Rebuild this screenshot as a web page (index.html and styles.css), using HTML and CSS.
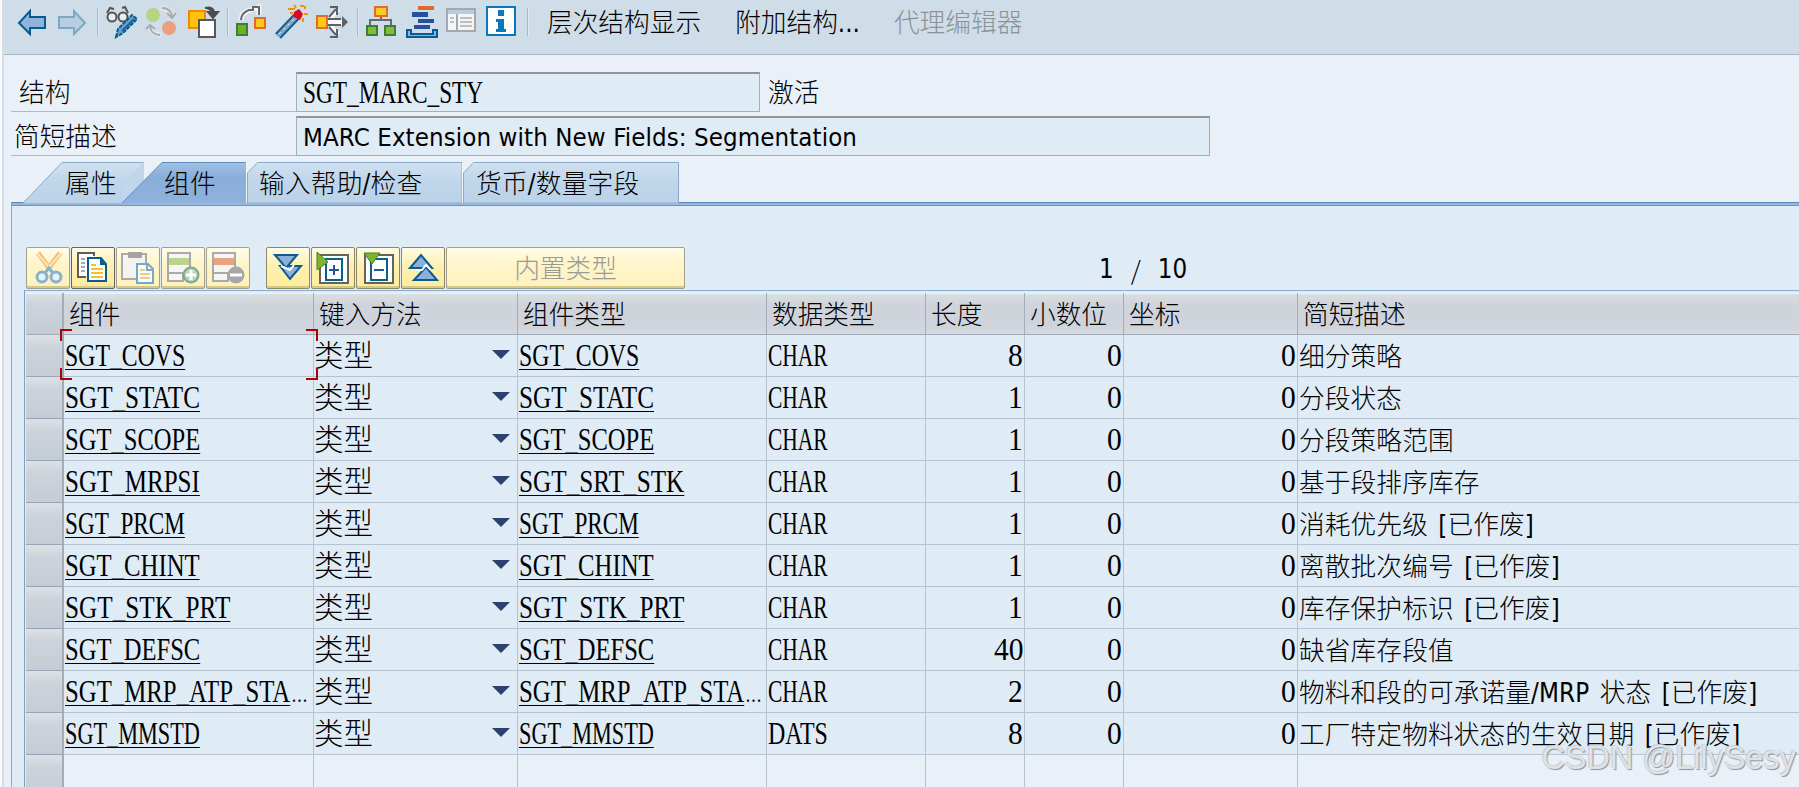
FILE: index.html
```html
<!DOCTYPE html>
<html lang="zh-CN">
<head>
<meta charset="utf-8">
<title>SGT_MARC_STY</title>
<link rel="stylesheet" href="styles.css">
</head>
<body>
<div class="window">
<header class="toolbar">
<svg class="toolbar-icons" width="530" height="54" viewBox="0 0 530 54">
<g stroke-width="2">
<path d="M19 23l11-12v6h15v11H30v6z" fill="#8fb3dd" stroke="#085a91"/>
<path d="M85 23L74 11v6H59v11h15v6z" fill="#b9cee0" stroke="#7ba8c3"/>
</g>
<path d="M97.500 8v28M227.500 8v28M357.500 8v28M527.500 8v28" stroke="#9dbbdb"/>
<path d="M98.500 8v28M228.500 8v28M358.500 8v28M528.500 8v28" stroke="#dce8f4"/>
<g fill="#e9edf0" stroke="#555" stroke-width="2">
<circle cx="112" cy="17" r="4.500"/><circle cx="123" cy="17" r="4.500"/>
<path d="M107 13l3-5 4 1M122 8l3-1 3 6" fill="none"/>
</g>
<path d="M116 37l2-8 14-14 5 4-14 14z" fill="#6aa2cc" stroke="#075c8e" stroke-width="2" stroke-dasharray="4 1"/>
<path d="M122 31l12-12" stroke="#235f9b" stroke-width="2"/>
<circle cx="153" cy="15" r="7" fill="#b6d482"/><circle cx="169" cy="28" r="7" fill="#e9a07e"/>
<g fill="none" stroke="#e3e6e8" stroke-width="5"><path d="M161 8q9 0 10 9M161 35q-10 0-11-10"/></g>
<g fill="none" stroke="#a5abb0" stroke-width="2"><path d="M162 8q9 0 10 9M167 13l5 5 4-5M160 35q-9 0-10-9M146 29l4-4 5 4"/></g>
<rect x="189" y="11" width="16" height="17" fill="#ffc30b" stroke="#f08b00" stroke-width="2"/>
<rect x="199" y="20" width="16" height="17" fill="#fff" stroke="#55585c" stroke-width="2"/>
<path d="M205 8q9-2 9 5M208 12h10l-5 6z" fill="#494c50" stroke="#494c50" stroke-width="2"/>
<path d="M241 20q0-8 10-10l8-3v8" fill="none" stroke="#f1f3f4" stroke-width="5"/>
<path d="M241 20q0-7 8-10h4V7h6v8" fill="none" stroke="#666" stroke-width="2"/>
<rect x="237" y="24" width="10" height="11" fill="#6cb41c" stroke="#3f7b3c" stroke-width="2"/>
<rect x="255" y="18" width="10" height="10" fill="#ffc814" stroke="#e16b28" stroke-width="2"/>
<path d="M278 36l21-22" stroke="#125b86" stroke-width="8"/>
<path d="M278 36l21-22" stroke="#7aa6c9" stroke-width="4"/>
<path d="M279 34l20-20" stroke="#e3edf4" stroke-width="1" stroke-dasharray="3 3"/>
<path d="M294 12l5-3 4 5-3 6-6-3z" fill="#d90b20"/>
<path d="M288 9h7M290 13h3M294 5l2 3M305 6v3M304 14h4M303 18v4M300 6h4" stroke="#ef920c" stroke-width="2"/>
<path d="M328 22h15M330 18l8-9M330 26l8 9" stroke="#fafafa" stroke-width="5"/>
<path d="M328 19h13M328 25h13M329 17l7-8M330 7h7v8M329 27l7 8M330 37h7v-8" stroke="#5d6064" fill="none" stroke-width="2"/>
<path d="M342 16v12l6-6z" fill="#5d6064"/>
<rect x="317" y="16" width="10" height="12" fill="#ffc814" stroke="#e16b28" stroke-width="2"/>
<path d="M381 16v4M370 25v-5h21v5" fill="none" stroke="#676b6e" stroke-width="2"/>
<rect x="375" y="7" width="12" height="9" fill="#ffca2c" stroke="#e16b28" stroke-width="2"/>
<g fill="#80be32" stroke="#3f7b3c" stroke-width="2"><rect x="367" y="26" width="10" height="9"/><rect x="385" y="26" width="10" height="9"/></g>
<path d="M418 6h16v4h-16z" fill="#df6d29"/><path d="M412 12h16v5h-16zM418 19h16v4h-16zM414 25h16v4h-16z" fill="#26529c"/>
<path d="M407 30h4v4h22v-4h4v7h-30z" fill="#8eb3de" stroke="#075d91" stroke-width="2"/>
<rect x="447" y="9" width="28" height="22" fill="#f4f5f6" stroke="#a6a8aa" stroke-width="2"/>
<path d="M448 10h26v4h-26z" fill="#b8cce5"/><path d="M457 14v16" stroke="#a6a8aa" stroke-width="2"/><path d="M450 18h4M450 22h4M460 18h12M460 22h12M460 26h12" stroke="#bcbec0" stroke-width="2"/>
<rect x="487" y="7" width="28" height="28" fill="#fff" stroke="#0779bc" stroke-width="2"/>
<path d="M498 10h6v6h-6zM496 19h8v10h2v3h-10v-3h2v-7h-2z" fill="#0779bc"/>
</svg>
<nav class="toolbar-links"><span>层次结构显示</span><span>附加结构...</span><span class="disabled">代理编辑器</span></nav>
</header>

<section class="form">
<div class="form-row"><label class="label inset">结构</label><div class="field name"><span class="mono">SGT_MARC_STY</span></div><span class="state">激活</span></div>
<div class="form-row"><label class="label">简短描述</label><div class="field desc"><span class="latin">MARC Extension with New Fields: Segmentation</span></div></div>
</section>

<nav class="tabs">
<svg class="tab-shapes" width="690" height="41" viewBox="0 0 690 41">
<defs>
<linearGradient id="tab" x2="0" y2="1"><stop stop-color="#d0e1ef"/><stop offset=".5" stop-color="#bfd5ea"/><stop offset="1" stop-color="#bcd2e8"/></linearGradient>
<linearGradient id="active" x2="0" y2="1"><stop stop-color="#a2c2e3"/><stop offset=".35" stop-color="#8aaeda"/><stop offset="1" stop-color="#8eb2dc"/></linearGradient>
</defs>
<path d="M23 41L62 .5h82L122 41z" fill="url(#tab)"/><path d="M23 41L62 .5h82" fill="none" stroke="#89aac9"/>
<path d="M144 0v19l-22 22V22z" fill="#c0d6ea"/><path d="M144 1h18l-18 18z" fill="#e9f0f7"/>
<path d="M122 41L162 .5h84V41z" fill="url(#active)"/><path d="M122 41L162 .5h84" fill="none" stroke="#5f8fc2"/>
<path d="M247.500 41V11l10-10.500h204.500V41z" fill="url(#tab)" stroke="#8aabd0"/>
<path d="M463.500 41V11l10-10.500h205V41z" fill="url(#tab)" stroke="#8aabd0"/>
<path d="M246.500 1v40M462.500 1v40" stroke="#f0f5fa"/>
</svg>
<span class="tab first">属性</span><span class="tab second">组件</span><span class="tab third">输入帮助/检查</span><span class="tab fourth">货币/数量字段</span>
</nav>

<main class="panel">
<div class="actions">
<div class="group">
<button class="btn faded"><svg width="42" height="40"><path d="M11 5l12 16M33 5L21 21" stroke="#f5bd78" stroke-width="5"/><path d="M10 5l12 14M34 5L22 19" stroke="#fbe6b4" stroke-width="2"/><g fill="#e8f1f4" stroke="#85b3ca" stroke-width="3"><circle cx="15" cy="29" r="5"/><circle cx="29" cy="29" r="5"/><path d="M18 25l4-5 4 5"/></g></svg></button>
<button class="btn strong"><svg width="42" height="40"><path d="M14 29H6V5h16v3" fill="#fff" stroke="#5d5d5d" stroke-width="2"/><path d="M9 11h4M9 15h4M9 19h4M9 23h4" stroke="#aaa" stroke-width="2"/><path d="M16 10h13l5 6v17H16z" fill="#fff" stroke="#075c91" stroke-width="2"/><path d="M28 10v7h6z" fill="#075c91"/><path d="M19 17h5M19 21h12M19 25h12M19 29h12" stroke="#f8bf31" stroke-width="2"/></svg></button>
<button class="btn faded"><svg width="42" height="40"><path d="M5 6h24v25H5z" fill="#f3f3f0" stroke="#aaa" stroke-width="2"/><path d="M11 4h14v6H11z" fill="#a4a4a4"/><path d="M20 16h11l5 5v14H20z" fill="#f8fafa" stroke="#75a9c7" stroke-width="2"/><path d="M30 16v6h6" fill="none" stroke="#75a9c7" stroke-width="2"/><path d="M23 22h5M23 26h10M23 30h10" fill="none" stroke="#e9ce83" stroke-width="2"/></svg></button>
<button class="btn faded"><svg width="42" height="40"><path d="M6 5h22v20H6zM6 25h15v8H6z" fill="#f5f5f3" stroke="#a9a9a9" stroke-width="2"/><path d="M7 10h20v7H7z" fill="#b9d588"/><circle cx="29" cy="27" r="7.500" fill="#b9d7b3" stroke="#84a58c" stroke-width="2"/><path d="M29 22v10M24 27h10" stroke="#fff" stroke-width="3"/></svg></button>
<button class="btn faded"><svg width="42" height="40"><path d="M6 5h22v20H6zM6 25h15v8H6z" fill="#f5f5f3" stroke="#a9a9a9" stroke-width="2"/><path d="M7 10h20v7H7z" fill="#e8a27f"/><circle cx="29" cy="27" r="8.500" fill="#a6a7a9"/><path d="M23 27h12" stroke="#fff" stroke-width="3"/></svg></button>
</div>
<div class="group">
<button class="btn"><svg width="42" height="40"><g fill="#8bb0d9" stroke="#0a5d8e" stroke-width="2"><path d="M13 18h21L23 31z"/><path d="M8 7h22L19 20z"/></g><path d="M14 18l9 4 4-5" fill="none" stroke="#fff" stroke-width="2"/></svg></button>
<button class="btn"><svg width="42" height="40"><rect x="8" y="7" width="28" height="28" fill="#fff" stroke="#66645a" stroke-width="2"/><path d="M14 11h16v21H14z" fill="#fff" stroke="#08618c" stroke-width="2"/><path d="M17 22h10M22 17v10" stroke="#245797" stroke-width="2"/><path d="M5 4v18l11-8z" fill="#7cb72b" stroke="#4a7d34"/></svg></button>
<button class="btn"><svg width="42" height="40"><rect x="8" y="7" width="28" height="28" fill="#fff" stroke="#66645a" stroke-width="2"/><path d="M14 11h16v21H14z" fill="#fff" stroke="#08618c" stroke-width="2"/><path d="M17 22h10" stroke="#245797" stroke-width="2"/><path d="M7 5h16l-8 11z" fill="#7cb72b" stroke="#4a7d34"/></svg></button>
<button class="btn"><svg width="42" height="40"><g fill="#8bb0d9" stroke="#0a5d8e" stroke-width="2"><path d="M8 20L19 7l11 13z"/><path d="M12 32l12-13 11 13z"/></g><path d="M14 22h6l4-5 5 5" fill="none" stroke="#fff" stroke-width="2"/></svg></button>
<button class="btn wide faded">内置类型</button>
</div>
<div class="counter"><b>1</b><i>/</i><b>10</b></div>
</div>

<div class="table">
<div class="row head"><span class="pick"></span><span>组件</span><span>键入方法</span><span>组件类型</span><span>数据类型</span><span>长度</span><span>小数位</span><span>坐标</span><span class="last">简短描述</span></div>
<div class="row"><span class="pick"></span><span><span class="mono"><u>SGT_COVS</u></span></span><span class="kind">类型</span><span><span class="mono"><u>SGT_COVS</u></span></span><span><span class="mono">CHAR</span></span><span class="num"><span class="mono">8</span></span><span class="num"><span class="mono">0</span></span><span class="num"><span class="mono">0</span></span><span class="text">细分策略</span></div>
<div class="row"><span class="pick"></span><span><span class="mono"><u>SGT_STATC</u></span></span><span class="kind">类型</span><span><span class="mono"><u>SGT_STATC</u></span></span><span><span class="mono">CHAR</span></span><span class="num"><span class="mono">1</span></span><span class="num"><span class="mono">0</span></span><span class="num"><span class="mono">0</span></span><span class="text">分段状态</span></div>
<div class="row"><span class="pick"></span><span><span class="mono"><u>SGT_SCOPE</u></span></span><span class="kind">类型</span><span><span class="mono"><u>SGT_SCOPE</u></span></span><span><span class="mono">CHAR</span></span><span class="num"><span class="mono">1</span></span><span class="num"><span class="mono">0</span></span><span class="num"><span class="mono">0</span></span><span class="text">分段策略范围</span></div>
<div class="row"><span class="pick"></span><span><span class="mono"><u>SGT_MRPSI</u></span></span><span class="kind">类型</span><span><span class="mono"><u>SGT_SRT_STK</u></span></span><span><span class="mono">CHAR</span></span><span class="num"><span class="mono">1</span></span><span class="num"><span class="mono">0</span></span><span class="num"><span class="mono">0</span></span><span class="text">基于段排序库存</span></div>
<div class="row"><span class="pick"></span><span><span class="mono"><u>SGT_PRCM</u></span></span><span class="kind">类型</span><span><span class="mono"><u>SGT_PRCM</u></span></span><span><span class="mono">CHAR</span></span><span class="num"><span class="mono">1</span></span><span class="num"><span class="mono">0</span></span><span class="num"><span class="mono">0</span></span><span class="text">消耗优先级 [已作废]</span></div>
<div class="row"><span class="pick"></span><span><span class="mono"><u>SGT_CHINT</u></span></span><span class="kind">类型</span><span><span class="mono"><u>SGT_CHINT</u></span></span><span><span class="mono">CHAR</span></span><span class="num"><span class="mono">1</span></span><span class="num"><span class="mono">0</span></span><span class="num"><span class="mono">0</span></span><span class="text">离散批次编号 [已作废]</span></div>
<div class="row"><span class="pick"></span><span><span class="mono"><u>SGT_STK_PRT</u></span></span><span class="kind">类型</span><span><span class="mono"><u>SGT_STK_PRT</u></span></span><span><span class="mono">CHAR</span></span><span class="num"><span class="mono">1</span></span><span class="num"><span class="mono">0</span></span><span class="num"><span class="mono">0</span></span><span class="text">库存保护标识 [已作废]</span></div>
<div class="row"><span class="pick"></span><span><span class="mono"><u>SGT_DEFSC</u></span></span><span class="kind">类型</span><span><span class="mono"><u>SGT_DEFSC</u></span></span><span><span class="mono">CHAR</span></span><span class="num"><span class="mono">40</span></span><span class="num"><span class="mono">0</span></span><span class="num"><span class="mono">0</span></span><span class="text">缺省库存段值</span></div>
<div class="row"><span class="pick"></span><span><span class="mono"><u>SGT_MRP_ATP_STA</u></span><em>...</em></span><span class="kind">类型</span><span><span class="mono"><u>SGT_MRP_ATP_STA</u></span><em>...</em></span><span><span class="mono">CHAR</span></span><span class="num"><span class="mono">2</span></span><span class="num"><span class="mono">0</span></span><span class="num"><span class="mono">0</span></span><span class="text">物料和段的可承诺量/MRP 状态 [已作废]</span></div>
<div class="row"><span class="pick"></span><span><span class="mono"><u>SGT_MMSTD</u></span></span><span class="kind">类型</span><span><span class="mono"><u>SGT_MMSTD</u></span></span><span><span class="mono">DATS</span></span><span class="num"><span class="mono">8</span></span><span class="num"><span class="mono">0</span></span><span class="num"><span class="mono">0</span></span><span class="text">工厂特定物料状态的生效日期 [已作废]</span></div>
<div class="row empty"><span class="pick"></span><span></span><span></span><span></span><span></span><span></span><span></span><span></span><span></span></div>
<svg class="cursor" width="258" height="51"><path d="M12 1H1v11M1 39v11h11M246 1h11v11M257 39v11h-11" fill="none" stroke="#ab0008" stroke-width="2"/></svg>
</div>
</main>
<div class="watermark">CSDN @LilySesy</div>
</div>
<script src="cells.js"></script>
</body>
</html>
```
FILE: cells.js
```js
// Condense technical names so every character averages one 15px cell.
const CELL = 15;
document.querySelectorAll('.mono').forEach((el) => {
  const natural = el.offsetWidth;
  const wanted = el.textContent.length * CELL;
  el.style.transform = `scaleX(${wanted / natural})`;
  el.style.marginRight = `${wanted - natural}px`;
  if (el.closest('.num')) {
    el.style.marginRight = '0';
  }
});
```
FILE: styles.css
```css
* { box-sizing: border-box; }
body { margin: 0; overflow: hidden; background: #e9f0f7; color: #000; font: 300 25.700px/32px "DejaVu Sans Condensed", "Noto Sans CJK SC", sans-serif; }
.window { position: relative; width: 1799px; height: 787px; overflow: hidden; border-left: 2px solid #f8fafc; box-shadow: inset 2px 0 #d3dce8; padding-left: 2px; white-space: nowrap; }
.toolbar { height: 55px; background: #cfdde8; border-bottom: 1px solid #a3b7cb; display: flex; }
.toolbar-icons { flex: none; margin-left: -4px; }
.toolbar-icons, .btn svg { display: block; }
.toolbar-links { display: flex; gap: 34px; padding: 7px 0 0 17px; }
.toolbar-links .disabled { color: #8c9299; }
.form { padding: 17px 0 0 7px; }
.form-row { display: flex; height: 40px; margin-bottom: 4px; }
.label { width: 285px; height: 40px; padding: 5px 0 0 3px; border-bottom: 1px solid #b7babc; }
.label.inset { padding-left: 8px; }
.field { height: 40px; background: #dfebf5; border: 1px solid #a9adb1; border-top: 2px solid #929598; padding: 3px 0 0 6px; }
.name { width: 464px; }
.desc { width: 914px; }
.state { padding: 5px 0 0 8px; }
.mono { display: inline-block; font: 400 31.500px/36px "Liberation Serif", serif; transform-origin: left; }
.field .mono { margin-top: -2px; }
.latin { font-size: 25.600px; letter-spacing: .1px; }
.tabs { position: relative; height: 41px; margin-top: 6px; }
.tab-shapes { position: absolute; left: -4px; top: 0; }
.tab { position: absolute; top: 6px; letter-spacing: .2px; }
.first { left: 61px; } .second { left: 160px; } .third { left: 255px; word-spacing: 2px; } .fourth { left: 472px; }
.panel { height: 590px; margin-left: 7px; margin-top: -1px; background: #dfebf5; border-left: 1px solid #8aaacb; border-top: 1px solid #5e87b8; box-shadow: inset 0 2px #94b8df, inset 0 3px #6f94bf; padding: 44px 0 0 12px; }
.actions { display: flex; height: 43px; padding-left: 2px; }
.group { display: flex; gap: 1px; margin-right: 16px; }
.btn { width: 44px; height: 42px; padding: 0; border: 1px solid #8d886a; border-radius: 2px; background: linear-gradient(#fffbe5, #fff0b0 45%, #feeb9d); box-shadow: inset 0 -2px #d6c983; font: inherit; }
.btn.faded { background: linear-gradient(#fffce9, #fff5cb 40%, #fff1be); border-color: #a3a08e; }
.btn.strong { border-color: #66645a; }
.btn.wide { width: 239px; color: #999b94; padding-top: 1px; }
.counter { display: flex; margin-left: 398px; padding-top: 6px; }
.counter b, .counter i { font-weight: 400; font-style: normal; }
.counter i { width: 44px; text-align: center; font-family: "Noto Sans CJK SC"; font-weight: 300; }
.table { position: relative; border-left: 1px solid #7f9fc4; border-top: 1px solid #8aaed2; padding: 2px 0 0 1px; }
.row { display: grid; grid-template-columns: 38px 250px 204px 249px 159px 99px 99px 174px 1fr; height: 42px; border-bottom: 1px solid #b5c3d3; }
.row > span { border-right: 1px solid #b5c3d3; padding-left: 1px; min-width: 0; }
.row > span:last-child { border-right: 0; }
.row > .pick { background: linear-gradient(#dce1e5, #cdd3da 30%, #c6ccd4); border-right: 2px solid #a0adba; border-bottom: 1px solid #97a4b3; margin-bottom: -1px; }
.row .mono { margin-top: 3px; }
.row u { text-decoration: underline; text-decoration-thickness: 1px; text-underline-offset: 3px; text-decoration-skip-ink: none; }
.row em { font: 300 22px/30px "Noto Sans CJK SC", sans-serif; margin-left: 1px; }
.row .num { text-align: right; padding-right: 1px; }
.row .num .mono { transform-origin: right; }
.head { background: linear-gradient(#dadfe2, #cfd4db 30%, #cfd3db 80%, #d7dade); border-color: #9caabb; }
.row.head > span { border-color: #a0adba; padding: 6px 0 0 5px; box-shadow: inset 0 1px #eef3f6; }
.row .kind { position: relative; font-size: 29.500px; padding: 5px 0 0; }
.kind::after { content: ""; position: absolute; right: 7px; top: 15px; border: 9px solid transparent; border-top: 9px solid #2b416f; border-bottom: 0; }
.row .text { padding: 6px 0 0 1px; letter-spacing: .1px; word-spacing: 3px; }
.empty { background: #e9f0f7; }
.cursor { position: absolute; left: 35px; top: 38px; }
.watermark { position: absolute; right: 3px; bottom: 9px; font: 400 32.400px/40px "Liberation Sans", sans-serif; color: rgba(235,238,242,.85); text-shadow: 1px 1px 1px #8d949c, -1px -1px 1px #c5cbd2; }
```
